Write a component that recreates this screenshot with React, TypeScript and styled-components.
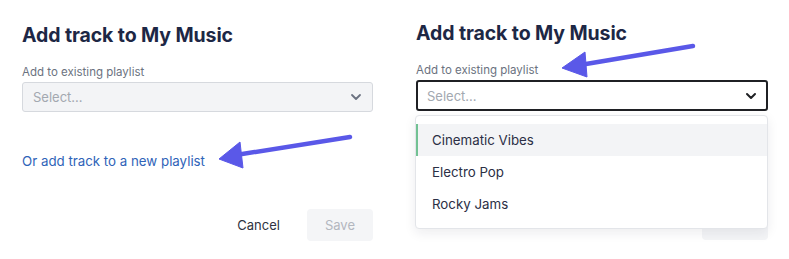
import * as React from "react";
import styled, { createGlobalStyle } from "styled-components";

const GlobalStyle = createGlobalStyle`
  html, body {
    margin: 0;
    padding: 0;
    background: #ffffff;
  }
  body {
    font-family: "Inter", "Noto Sans", sans-serif;
    -webkit-font-smoothing: antialiased;
  }
`;

const Page = styled.div`
  position: relative;
  display: grid;
  grid-template-columns: 394px 395px;
  width: 789px;
  height: 259px;
  overflow: hidden;
`;

const Panel = styled.div<{ $lift?: number }>`
  display: flex;
  flex-direction: column;
  padding: ${(p) => 23 - (p.$lift || 0)}px 21px 0 22px;
`;

const Title = styled.h2`
  margin: 0;
  font-size: 19.5px;
  line-height: 24px;
  font-weight: 700;
  color: #1d2745;
  letter-spacing: -0.1px;
`;

const Label = styled.label`
  display: block;
  margin-top: 18px;
  font-size: 11.5px;
  line-height: 14px;
  color: #6b7280;
`;

const SelectWrap = styled.div`
  position: relative;
  margin-top: 3px;
`;

const SelectBox = styled.div<{ $open?: boolean }>`
  box-sizing: border-box;
  display: flex;
  align-items: center;
  justify-content: space-between;
  height: ${(p) => (p.$open ? 31 : 30)}px;
  padding: 0 ${(p) => (p.$open ? 9 : 10)}px;
  border: ${(p) => (p.$open ? "2px solid #1f2024" : "1px solid #d6d9de")};
  border-radius: 3px;
  background: ${(p) => (p.$open ? "#ffffff" : "#f3f4f6")};
  font-size: 13px;
  color: #a3a8b0;
`;

const Chevron = styled.svg<{ $dark?: boolean }>`
  width: 12px;
  height: 12px;
  color: ${(p) => (p.$dark ? "#1f2024" : "#6b7280")};
`;

const Menu = styled.ul`
  position: absolute;
  top: calc(100% + 4px);
  left: -1px;
  right: 0;
  margin: 0;
  padding: 8px 0;
  list-style: none;
  background: #ffffff;
  border: 1px solid #e3e5e9;
  border-radius: 4px;
  box-shadow: 0 4px 12px rgba(20, 30, 50, 0.08);
  z-index: 2;
`;

const MenuItem = styled.li<{ $active?: boolean }>`
  box-sizing: border-box;
  height: 32px;
  display: flex;
  align-items: center;
  padding-left: 14px;
  font-size: 13.3px;
  color: #2b2f45;
  background: ${(p) => (p.$active ? "#f3f4f6" : "transparent")};
  border-left: 2px solid ${(p) => (p.$active ? "#72c193" : "transparent")};
`;

const NewLink = styled.a<{ $hidden?: boolean }>`
  display: block;
  margin-top: 40px;
  font-size: 13.3px;
  line-height: 18px;
  color: #2f63b8;
  text-decoration: none;
  visibility: ${(p) => (p.$hidden ? "hidden" : "visible")};
`;

const Actions = styled.div`
  display: flex;
  justify-content: flex-end;
  gap: 11px;
  margin-top: 39px;
`;

const Button = styled.button<{ $primary?: boolean }>`
  height: 32px;
  padding: 0 ${(p) => (p.$primary ? 18 : 16)}px;
  border: none;
  border-radius: 4px;
  font-family: inherit;
  font-size: 13px;
  background: ${(p) => (p.$primary ? "#f4f5f7" : "transparent")};
  color: ${(p) => (p.$primary ? "#b3b7bf" : "#2f3340")};
`;

const Overlay = styled.svg`
  position: absolute;
  inset: 0;
  width: 789px;
  height: 259px;
  pointer-events: none;
  z-index: 3;
`;

const playlists = ["Cinematic Vibes", "Electro Pop", "Rocky Jams"];

const ChevronIcon: React.FC<{ dark?: boolean }> = ({ dark }) => (
  <Chevron $dark={dark} viewBox="0 0 12 12" fill="none">
    <path d="M2 4l4 4 4-4" stroke="currentColor" strokeWidth={dark ? 2 : 1.8} strokeLinecap="round" strokeLinejoin="round" />
  </Chevron>
);

const Dialog: React.FC<{ open?: boolean; lift?: number }> = ({ open, lift }) => (
  <Panel $lift={lift}>
    <Title>Add track to My Music</Title>
    <Label>Add to existing playlist</Label>
    <SelectWrap>
      <SelectBox $open={open}>
        <span>Select...</span>
        <ChevronIcon dark={open} />
      </SelectBox>
      {open && (
        <Menu>
          {playlists.map((name, i) => (
            <MenuItem key={name} $active={i === 0}>
              {name}
            </MenuItem>
          ))}
        </Menu>
      )}
    </SelectWrap>
    {/* под открытым меню ссылку не видно */}
    <NewLink href="#" $hidden={open}>Or add track to a new playlist</NewLink>
    <Actions>
      <Button>Cancel</Button>
      <Button $primary>Save</Button>
    </Actions>
  </Panel>
);

// стрелки-аннотации поверх скриншота
const Arrows: React.FC = () => (
  <Overlay viewBox="0 0 789 259">
    <g fill="#5a58e8" stroke="#5a58e8">
      <line x1="350" y1="137" x2="236" y2="155" strokeWidth="4.5" strokeLinecap="round" />
      <polygon points="219,159 240,142 243,168" strokeWidth="1" strokeLinejoin="round" />
      <line x1="693" y1="46" x2="580" y2="65" strokeWidth="4.5" strokeLinecap="round" />
      <polygon points="562,68 585,52 587,77" strokeWidth="1" strokeLinejoin="round" />
    </g>
  </Overlay>
);

const App: React.FC = () => (
  <>
    <GlobalStyle />
    <Page>
      <Dialog />
      <Dialog open lift={2} />
      <Arrows />
    </Page>
  </>
);

export default App;
